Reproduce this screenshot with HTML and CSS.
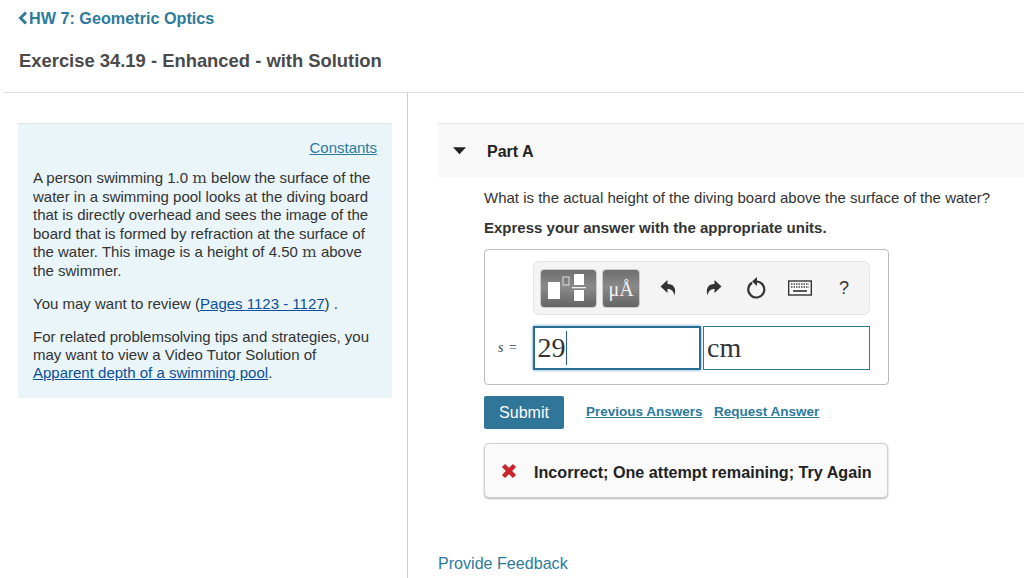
FILE: index.html
```html
<!DOCTYPE html>
<html lang="en">
<head>
<meta charset="utf-8">
<title>Exercise 34.19</title>
<link rel="stylesheet" href="styles.css">
</head>
<body>
<header class="top">
  <a class="back" href="#"><svg class="back-icon" viewBox="0 0 10 14" width="10" height="14"><path d="M8 1.5 2.5 7 8 12.5" fill="none" stroke="#2d7a9c" stroke-width="3"/></svg>HW 7: Geometric Optics</a>
  <h1 class="title">Exercise 34.19 - Enhanced - with Solution</h1>
</header>
<main class="columns">
  <section class="left">
    <div class="panel">
      <div class="constants"><a href="#">Constants</a></div>
      <p class="para first">A person swimming 1.0 <span class="math">m</span> below the surface of the water in a swimming pool looks at the diving board that is directly overhead and sees the image of the board that is formed by refraction at the surface of the water. This image is a height of 4.50 <span class="math">m</span> above the swimmer.</p>
      <p class="para review">You may want to review (<a class="blue" href="#">Pages 1123 - 1127</a>) .</p>
      <p class="para related">For related problemsolving tips and strategies, you may want to view a Video Tutor Solution of <a class="blue" href="#">Apparent depth of a swimming pool</a>.</p>
    </div>
  </section>
  <section class="right">
    <div class="part-head">
      <svg class="caret" viewBox="0 0 14 8" width="14" height="8"><path d="M0 0h14L7 7.5z" fill="#222"/></svg>
      <span class="part-title">Part A</span>
    </div>
    <div class="part-body">
      <p class="question">What is the actual height of the diving board above the surface of the water?</p>
      <p class="express">Express your answer with the appropriate units.</p>
      <div class="answer">
        <div class="toolbar">
          <div class="tool tool-wide">
            <svg viewBox="0 0 44 30" width="44" height="30">
              <rect x="1" y="9" width="12" height="17" fill="#fff"/>
              <rect x="16" y="4" width="6" height="8" fill="none" stroke="#ddd" stroke-width="1"/>
              <rect x="27" y="1" width="10" height="11" fill="#fff"/>
              <rect x="25" y="14" width="14" height="1.3" fill="#eee"/>
              <rect x="27" y="17" width="10" height="11" fill="#fff"/>
            </svg>
          </div>
          <div class="tool tool-unit">μÅ</div>
          <svg class="ticon t-undo" viewBox="0 0 18 18" width="18" height="18"><path d="M7.500 1 0.500 7.500l7 6.500v-4c3.500 0 6 1.500 7 6.500C16.500 9.500 14 5 7.500 5z" fill="#333"/></svg>
          <svg class="ticon t-redo" viewBox="0 0 18 18" width="18" height="18"><path d="M10.500 1l7 6.500-7 6.500v-4c-3.500 0-6 1.500-7 6.500C1.500 9.500 4 5 10.500 5z" fill="#333"/></svg>
          <svg class="ticon t-reset" viewBox="0 0 20 22" width="20" height="22"><path d="M6 5.700a8 8 0 1 0 5-1.200" fill="none" stroke="#333" stroke-width="2.200"/><path d="M11 0v9L6 4.500z" fill="#333"/></svg>
          <svg class="ticon t-keys" viewBox="0 0 24 16" width="24" height="16"><rect x=".7" y="1" width="22.600" height="14" fill="#fff" stroke="#333" stroke-width="1.400"/><path d="M3 4h18M3 7h18" stroke="#444" stroke-width="1.600" stroke-dasharray="1.500 1"/><path d="M5 11h14" stroke="#444" stroke-width="1.800"/></svg>
          <span class="help">?</span>
        </div>
        <div class="entry">
          <span class="var"><i>s</i> =</span>
          <div class="field field-value">29<span class="cursor"></span></div>
          <div class="field field-unit">cm</div>
        </div>
      </div>
      <div class="actions">
        <button class="submit" type="button">Submit</button>
        <a class="action-link" href="#">Previous Answers</a>
        <a class="action-link" href="#">Request Answer</a>
      </div>
      <div class="feedback">
        <svg class="cross" viewBox="0 0 16 16" width="16" height="16"><path d="M2.500 2.500 13.500 13.500M13.500 2.500 2.500 13.500" stroke="#c9252d" stroke-width="4.500"/></svg>
        <span class="feedback-text">Incorrect; One attempt remaining; Try Again</span>
      </div>
    </div>
    <a class="provide" href="#">Provide Feedback</a>
  </section>
</main>
</body>
</html>
```
FILE: styles.css
```css
html, body { margin: 0; padding: 0; }
body {
  width: 1024px;
  height: 578px;
  overflow: hidden;
  background: #fff;
  font-family: "Liberation Sans", Arial, sans-serif;
  color: #333;
  font-size: 15px;
}
a { color: inherit; }
.top {
  height: 92px;
  margin-left: 3px;
  padding-left: 15px;
  border-bottom: 1px solid #e0e0e0;
}
.back {
  display: flex;
  align-items: center;
  gap: 1px;
  padding-top: 9px;
  height: 18px;
  line-height: 18px;
  font-size: 16.200px;
  font-weight: bold;
  color: #2d7a9c;
  text-decoration: none;
}
.title {
  margin: 23px 0 0 1px;
  font-size: 18.400px;
  line-height: 22px;
  font-weight: bold;
  color: #4a4a4a;
}
.columns {
  display: flex;
  height: 485px;
}
.left {
  flex: none;
  box-sizing: border-box;
  width: 408px;
  padding: 30px 15px 0 18px;
  border-right: 1px solid #c8ccd4;
}
.panel {
  height: 275px;
  box-sizing: border-box;
  border-top: 1px solid #dde3e6;
  background: #e9f5f8;
  padding: 15px 15px 0 15px;
}
.constants {
  text-align: right;
  line-height: 18px;
  color: #2d7a9c;
}
.para {
  margin: 0 0 15px;
  line-height: 18.500px;
  color: #333;
}
.para.first { margin-top: 12px; }
.para.review { margin-bottom: 14px; }
.para.related { line-height: 18.200px; }
.math { font-family: "DejaVu Serif", serif; font-size: 15.500px; line-height: 1; color: #444; }
.blue { color: #0a4f9c; }
.right {
  flex: 1;
  padding: 30px 0 0 30px;
  min-width: 0;
}
.part-head {
  display: flex;
  align-items: center;
  height: 54px;
  box-sizing: border-box;
  border-top: 1px solid #e4e4e4;
  background: #f8f8f8;
  padding-left: 15px;
}
.caret { margin-right: 21px; width: 13px; }
.part-title {
  font-weight: bold;
  font-size: 16px;
  padding-top: 2px;
  color: #222;
}
.part-body {
  padding-left: 46px;
}
.question {
  margin: 12px 0 0;
  line-height: 18px;
}
.express {
  margin: 12px 0 0;
  line-height: 18px;
  font-weight: bold;
}
.answer {
  width: 405px;
  height: 136px;
  margin-top: 12px;
  box-sizing: border-box;
  border: 1px solid #bbb;
  border-radius: 4px;
  padding: 11px 18px 0 12px;
  background: #fff;
}
.toolbar {
  display: flex;
  align-items: center;
  height: 54px;
  box-sizing: border-box;
  margin-left: 36px;
  border: 1px solid #e4e4e4;
  border-radius: 6px;
  background: #f4f4f4;
  padding-left: 6px;
}
.tool {
  height: 39px;
  box-sizing: border-box;
  border-radius: 4px;
  border: 1px solid #ccc;
  background: linear-gradient(#6e6e6e, #8a8a8a 45%, #646464);
  display: flex;
  align-items: center;
  justify-content: center;
  color: #f2f2f2;
}
.tool-wide { width: 57px; margin-right: 5px; }
.tool-unit {
  width: 38px;
  padding-top: 3px;
  font-family: "Liberation Serif", serif;
  font-size: 20px;
}
.ticon { flex: none; }
.t-undo { margin-left: 20px; }
.t-redo { margin-left: 26px; }
.t-reset { margin-left: 24px; }
.t-keys { margin-left: 22px; }
.help {
  margin-left: 27px;
  font-size: 18px;
  color: #333;
}
.entry {
  display: flex;
  align-items: center;
  margin-top: 10px;
  padding-top: 1px;
}
.var {
  width: 36px;
  padding-left: 1px;
  box-sizing: border-box;
  font-family: "Liberation Serif", serif;
  font-size: 14px;
  word-spacing: 2px;
  color: #444;
}
.field {
  height: 44px;
  box-sizing: border-box;
  font-family: "Liberation Serif", serif;
  font-size: 28px;
  line-height: 40px;
  color: #333;
  padding-left: 2.500px;
  display: flex;
  align-items: center;
}
.field-value {
  width: 168px;
  border: 2px solid #2a6f93;
  box-shadow: 0 0 3px #5aa3c4;
}
.field-unit {
  width: 167px;
  margin-left: 2px;
  border: 1px solid #2a7a9e;
  padding-left: 3px;
}
.cursor {
  display: block;
  width: 1px;
  height: 34px;
  background: #2b4fb0;
}
.actions {
  display: flex;
  align-items: center;
  margin-top: 11px;
}
.submit {
  width: 80px;
  height: 33px;
  border: 0;
  border-radius: 2px;
  background: #2f7699;
  color: #fff;
  font: 16px "Liberation Sans", Arial, sans-serif;
  padding: 0;
  margin-right: 22px;
}
.action-link {
  font-size: 13.500px;
  font-weight: bold;
  color: #2d7a9c;
  margin-right: 11.500px;
  position: relative;
  top: -1px;
}
.feedback {
  width: 404px;
  height: 55px;
  margin-top: 14px;
  box-sizing: border-box;
  display: flex;
  align-items: center;
  border: 1px solid #d0d0d0;
  border-radius: 5px;
  background: #fafafa;
  box-shadow: 0 1px 2px rgba(0,0,0,.3);
  padding-left: 16px;
  font-weight: bold;
  font-size: 16.150px;
  color: #222;
}
.feedback-text { padding-top: 3px; }
.cross { margin-right: 17px; }
.provide {
  display: block;
  margin-top: 56px;
  font-size: 16.100px;
  color: #2d7a9c;
  text-decoration: none;
}
```
